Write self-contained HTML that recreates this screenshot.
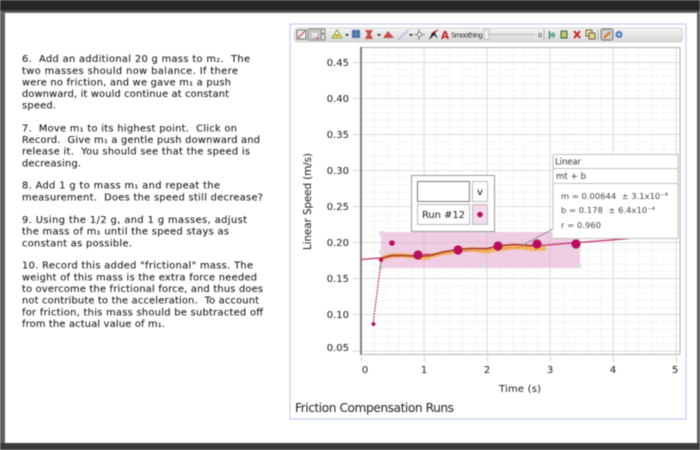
<!DOCTYPE html>
<html><head><meta charset="utf-8"><style>
html,body{margin:0;padding:0;width:700px;height:450px;overflow:hidden;background:#fff}
svg{display:block;filter:blur(.4px)}
text{font-family:"DejaVu Sans","Liberation Sans",sans-serif}
</style></head><body>
<svg width="700" height="450" viewBox="0 0 700 450" xmlns="http://www.w3.org/2000/svg">
<defs>
<linearGradient id="top" x1="0" y1="0" x2="0" y2="1"><stop offset="0" stop-color="#2a2a2a"/><stop offset=".7" stop-color="#222"/><stop offset="1" stop-color="#777"/></linearGradient>
<linearGradient id="bar" x1="0" y1="0" x2="0" y2="1"><stop offset="0" stop-color="#f2f2f2"/><stop offset="1" stop-color="#d8d8d8"/></linearGradient>
<pattern id="minor" x="361" y="47.3" width="12.6" height="7.22" patternUnits="userSpaceOnUse"><path d="M.5 0V7.22M0 .5H12.6" stroke="#f5f5f5" fill="none"/></pattern>
</defs>
<rect width="700" height="450" fill="#5f5f5f"/>
<rect width="700" height="13" fill="url(#top)"/>
<rect x="0" y="443" width="700" height="7" fill="#3a3a3a"/>
<rect x="5" y="13" width="692" height="430" fill="#fff"/>

<!-- left text -->
<g font-size="9.800" fill="#1a1a1a" stroke="#1a1a1a" stroke-width=".1">
<text x="22" y="62" textLength="228" lengthAdjust="spacing" xml:space="preserve">6.  Add an additional 20 g mass to m₂.  The</text>
<text x="22" y="74" textLength="216" lengthAdjust="spacing">two masses should now balance.  If there</text>
<text x="22" y="85.500" textLength="209" lengthAdjust="spacing">were no friction, and we gave m₁ a push</text>
<text x="22" y="97" textLength="207" lengthAdjust="spacing">downward, it would continue at constant</text>
<text x="22" y="108.500" textLength="34" lengthAdjust="spacing">speed.</text>
<text x="22" y="131.500" textLength="215" lengthAdjust="spacing" xml:space="preserve">7.  Move m₁ to its highest point.  Click on</text>
<text x="22" y="143" textLength="238" lengthAdjust="spacing" xml:space="preserve">Record.  Give m₁ a gentle push downward and</text>
<text x="22" y="154.500" textLength="228" lengthAdjust="spacing" xml:space="preserve">release it.  You should see that the speed is</text>
<text x="22" y="166.500" textLength="59" lengthAdjust="spacing">decreasing.</text>
<text x="22" y="188.500" textLength="198" lengthAdjust="spacing">8.  Add 1 g to mass m₁ and repeat the</text>
<text x="22" y="200.500" textLength="241" lengthAdjust="spacing" xml:space="preserve">measurement.  Does the speed still decrease?</text>
<text x="22" y="223" textLength="225" lengthAdjust="spacing">9.  Using the 1/2 g, and 1 g masses, adjust</text>
<text x="22" y="234.500" textLength="207" lengthAdjust="spacing">the mass of m₁ until the speed stays as</text>
<text x="22" y="246.500" textLength="110" lengthAdjust="spacing">constant as possible.</text>
<text x="22" y="268.500" textLength="231" lengthAdjust="spacing">10.  Record this added "frictional" mass. The</text>
<text x="22" y="280.500" textLength="235" lengthAdjust="spacing">weight of this mass is the extra force needed</text>
<text x="22" y="292" textLength="241" lengthAdjust="spacing">to overcome the frictional force, and thus does</text>
<text x="22" y="303.500" textLength="237" lengthAdjust="spacing" xml:space="preserve">not contribute to the acceleration.  To account</text>
<text x="22" y="315.500" textLength="241" lengthAdjust="spacing">for friction, this mass should be subtracted off</text>
<text x="22" y="327" textLength="143" lengthAdjust="spacing">from the actual value of m₁.</text>
</g>

<!-- panel -->
<rect x="290" y="24" width="396" height="395" fill="#fff" stroke="#b9c5ea"/>
<rect x="294.500" y="28" width="388" height="14" rx="3" fill="url(#bar)" stroke="#d4d4d4"/>

<!-- toolbar icons -->
<rect x="297" y="30" width="9" height="9" fill="#eee" stroke="#777"/><path d="M298 38L305 31" stroke="#c33"/>
<rect x="308" y="29" width="13" height="11" rx="1" fill="#ccc" stroke="#888"/><rect x="311" y="32" width="7" height="6" fill="#e8e8e8" stroke="#999" stroke-width=".5"/><path d="M316 38h3" stroke="#c33"/>
<rect x="321" y="29" width="4" height="11" fill="#ddd" stroke="#888"/><path d="M322 33h2l-1 2z" fill="#222"/>
<path d="M332 38l5-8 5 8z" fill="#fff" stroke="#7a3"/><path d="M334 37h6l-1.500-3h-3z" fill="#e9a020"/>
<path d="M345 34h4l-2 2.500z" fill="#333"/>
<rect x="352" y="30" width="8" height="8" fill="#456fa8"/><path d="M356 29v10M351 34h10" stroke="#8aa" stroke-width=".6"/>
<path d="M365 30h8l-2.500 4 2.500 5h-8l2.500-5z" fill="#c9504a"/>
<path d="M377 34h4l-2 2.500z" fill="#333"/>
<path d="M383 38l5-7 6 7z" fill="#c9504a"/>
<path d="M398 39l3-2 2-3 3-1 2-3" stroke="#b6a0d8" stroke-width="1.600" stroke-dasharray="1.500 1" fill="none"/>
<path d="M409 34h4l-2 2.500z" fill="#333"/>
<path d="M419 29v11M414 34.500h11" stroke="#666" stroke-width=".8"/><circle cx="419.500" cy="34.500" r="2" fill="#fff" stroke="#666" stroke-width=".8"/>
<path d="M429 40l3-7 6-3-3 3 3 6-4-4z" fill="#222"/><path d="M432 33l6-3" stroke="#c33"/>
<text x="441" y="39" font-size="10.500" font-weight="bold" fill="#c22222">A</text>
<text x="451" y="37.500" font-size="7" fill="#333" textLength="32" lengthAdjust="spacing">Smoothing</text>
<rect x="484" y="29.500" width="5" height="10" fill="#eee" stroke="#aaa" stroke-width=".7"/>
<path d="M489 34.500H535" stroke="#aaa" stroke-width=".7"/>
<text x="538" y="37.500" font-size="6.500" fill="#333">0</text>
<path d="M544 29v11" stroke="#999" stroke-width=".7"/>
<path d="M549.500 31v8" stroke="#364" stroke-width="1.200"/><circle cx="553" cy="35" r="2.500" fill="#5fb59a"/>
<rect x="561" y="31" width="6" height="7" fill="#c3c860" stroke="#364"/>
<path d="M574 31l6 7M580 31l-6 7" stroke="#d01f26" stroke-width="2"/>
<rect x="586" y="30" width="6" height="6" fill="#f4e6a0" stroke="#665"/><rect x="589" y="33" width="6" height="6" fill="#eed77a" stroke="#665"/>
<path d="M598 29v11" stroke="#999" stroke-width=".7"/>
<rect x="601" y="29" width="12" height="11" rx="2" fill="#ccc" stroke="#777"/><path d="M604 38l6-6" stroke="#e07a1f" stroke-width="2"/>
<circle cx="619" cy="34.500" r="3.500" fill="#4a7db8"/><circle cx="619" cy="34.500" r="1.300" fill="#dbe6f3"/>

<!-- plot -->
<rect x="361" y="47" width="319" height="307" fill="#fff"/>
<rect x="361" y="47" width="319" height="307" fill="url(#minor)"/>
<g stroke="#dedede">
<path d="M424 47V354M487 47V354M550 47V354M613 47V354M676 47V354"/>
<path d="M361 62.500H680M361 98.500H680M361 134.500H680M361 170.500H680M361 206.500H680M361 242.500H680M361 278.500H680M361 314.500H680M361 351H680"/>
</g>
<path d="M361 47.500H680V354" fill="none" stroke="#b0b0b0"/>
<path d="M361 47V355" stroke="#808080" stroke-width="2"/>
<path d="M361 354.500H680" stroke="#b0b0b0"/>
<g stroke="#d0d0d0">
<path d="M353 62.500h7M353 98.500h7M353 134.500h7M353 170.500h7M353 206.500h7M353 242.500h7M353 278.500h7M353 314.500h7M353 351h7"/>
<path d="M361.500 356v6M424.500 356v6M487.500 356v6M550.500 356v6M613.500 356v6M676.500 356v6"/>
</g>
<g font-size="10" fill="#1a1a1a" text-anchor="end">
<text x="349" y="66">0.45</text><text x="349" y="102">0.40</text><text x="349" y="138">0.35</text><text x="349" y="174">0.30</text><text x="349" y="210">0.25</text><text x="349" y="246">0.20</text><text x="349" y="282">0.15</text><text x="349" y="318">0.10</text><text x="349" y="351">0.05</text>
</g>
<g font-size="10" fill="#1a1a1a" text-anchor="middle">
<text x="365" y="373">0</text><text x="424" y="373">1</text><text x="487" y="373">2</text><text x="550" y="373">3</text><text x="613" y="373">4</text><text x="675" y="373">5</text>
</g>
<text x="499" y="392" font-size="10" fill="#1a1a1a" textLength="42" lengthAdjust="spacing">Time (s)</text>
<text transform="translate(311,250) rotate(-90)" font-size="10.500" fill="#1a1a1a" textLength="97" lengthAdjust="spacing">Linear Speed (m/s)</text>
<text x="295" y="412" font-size="12.200" fill="#222" textLength="159" lengthAdjust="spacing">Friction Compensation Runs</text>

<!-- selection band -->
<rect x="381" y="232" width="199" height="36" fill="#efcde2"/>
<path d="M424 232V268M487 232V268M550 232V268M381 242.500H580" stroke="#dfbdd3"/>
<g fill="#e0dce0"><rect x="379" y="231" width="5" height="4"/><rect x="481" y="231" width="5" height="4"/><rect x="577" y="231" width="4" height="4"/><rect x="379" y="250" width="5" height="4"/><rect x="577" y="247" width="4" height="4"/><rect x="379" y="265" width="5" height="4"/><rect x="481" y="264" width="5" height="4"/><rect x="577" y="264" width="4" height="4"/></g>
<path d="M361 259.500L630 238.500" stroke="#c4306f" stroke-width="1.200" fill="none"/>
<path d="M373 324L381 262" stroke="#b0105f" stroke-dasharray="2 1" fill="none"/>
<path d="M381 259l8-3 10-1 10 1 8 1 8 1 9-3 9-2 9-1 10-2 10-1 9 2 8 0 10-2 8-1 10-1 9 1 8 1 12-1" fill="none" stroke="#f2b04a" stroke-width="4.500" stroke-dasharray="3 .6"/>
<path d="M381 258.500l10-3 14 0 14 1 12-1 14-4 14-2 14-1 14 0 14-3 14-1 16 1 10-1" fill="none" stroke="#a83a30" stroke-width="1.600"/>
<g fill="#b80e60">
<circle cx="373.500" cy="324" r="2"/><circle cx="381" cy="260" r="2"/><circle cx="392" cy="243" r="2.800"/>
<circle cx="418" cy="255" r="4.600"/><circle cx="458" cy="250" r="4.600"/><circle cx="498" cy="246" r="4.600"/><circle cx="537" cy="244" r="4.600"/><circle cx="576" cy="244" r="4.600"/>
</g>
<path d="M523 245L553 229" stroke="#999" fill="none"/>

<!-- run legend -->
<rect x="411.500" y="175.500" width="83" height="56" fill="#fff" stroke="#999"/>
<rect x="417.500" y="181.500" width="52" height="20" fill="#fff" stroke="#777"/>
<rect x="472.500" y="181.500" width="15" height="20" fill="#fff" stroke="#bbb"/>
<text x="480" y="195" font-size="10" fill="#111" text-anchor="middle">v</text>
<rect x="417.500" y="204.500" width="52" height="20" fill="#fff" stroke="#bbb"/>
<text x="422" y="218" font-size="10" fill="#222" textLength="43" lengthAdjust="spacing">Run #12</text>
<rect x="472.500" y="204.500" width="15" height="20" fill="#f4dcea" stroke="#bbb"/>
<circle cx="480" cy="214.500" r="2.800" fill="#b80e60"/>

<!-- fit box -->
<rect x="553" y="154" width="125" height="84" fill="#fff"/>
<path d="M553 154.500H678M553 168.500H678M553 183.500H678M678 154V238M553 238.500H678M553 154V229" stroke="#c0c0c0" fill="none"/>
<text x="555" y="164.500" font-size="8.500" fill="#333" textLength="26" lengthAdjust="spacing">Linear</text>
<text x="556" y="179" font-size="8.500" fill="#333" textLength="30" lengthAdjust="spacing">mt + b</text>
<g font-size="8.300" fill="#444">
<text x="561" y="199" textLength="107" lengthAdjust="spacing" xml:space="preserve">m = 0.00644  ± 3.1x10⁻⁴</text>
<text x="561" y="213" textLength="94" lengthAdjust="spacing" xml:space="preserve">b = 0.178  ± 6.4x10⁻⁴</text>
<text x="561" y="228" textLength="40" lengthAdjust="spacing">r = 0.960</text>
</g>
</svg>
</body></html>
